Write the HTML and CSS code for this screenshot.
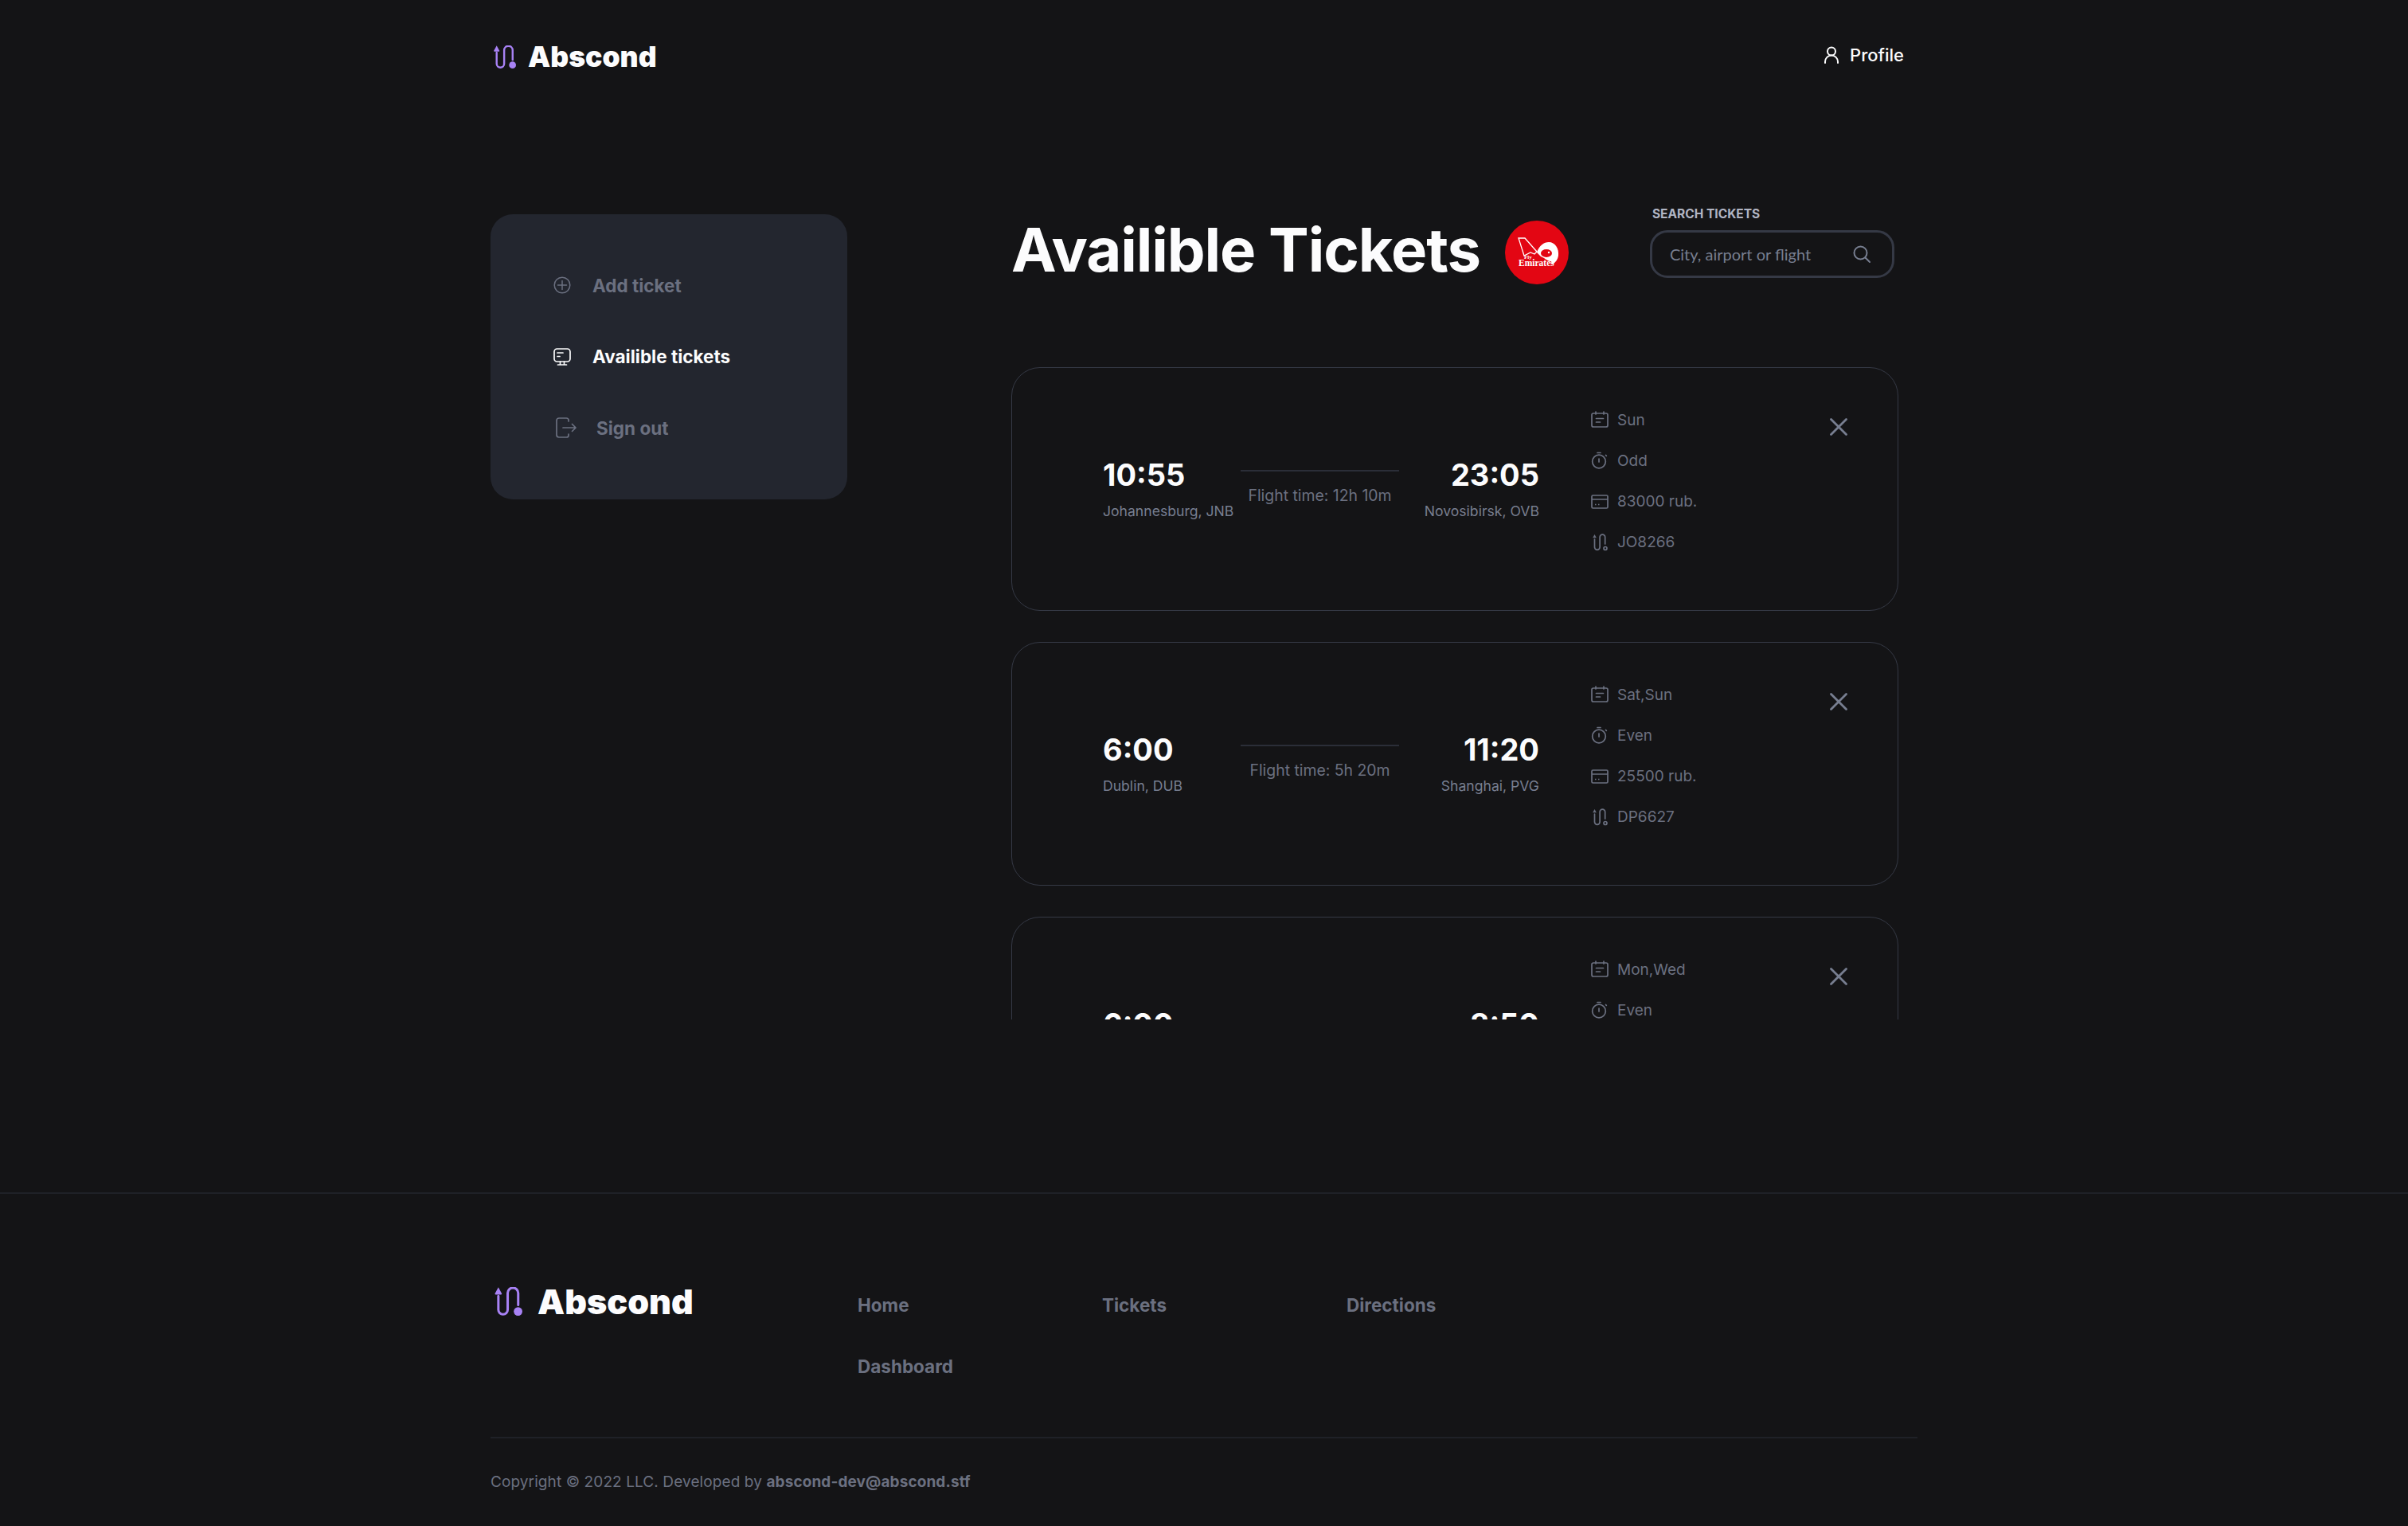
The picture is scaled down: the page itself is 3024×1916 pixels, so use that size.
FILE: index.html
```html
<!DOCTYPE html>
<html lang="en">
<head>
    <meta charset="UTF-8">
    <meta name="viewport" content="width=device-width, initial-scale=1.0">
    <title>Abscond</title>
    <link rel="stylesheet" href="styles.css">
</head>
<body>
<svg class="sprite" width="0" height="0">
    <symbol id="i-logo" viewBox="0 0 24 24">
        <path d="M3.9 7.5V19a3.9 3.9 0 0 0 7.8 0V5a4.4 4.4 0 0 1 8.8 0v10" fill="none" stroke="currentColor" stroke-width="2" stroke-linecap="round"/>
        <path d="M3.9 .2 6.7 5.4a.7.7 0 0 1-.6 1H1.700a.7.7 0 0 1-.6-1z" fill="currentColor"/>
        <circle cx="20.400" cy="20.400" r="3.600" fill="currentColor"/>
    </symbol>
    <symbol id="i-route" viewBox="0 0 22 22">
        <path d="M4.500 7v10a3.300 3.300 0 0 0 6.600 0V4.500a3.300 3.300 0 0 1 6.600 0V13" fill="none" stroke="currentColor" stroke-width="1.700" stroke-linecap="round"/>
        <path d="M4.500 1 6.800 5.200H2.200z" fill="currentColor"/>
        <circle cx="18" cy="18.500" r="2" fill="none" stroke="currentColor" stroke-width="1.700"/>
    </symbol>
    <symbol id="i-cal" viewBox="0 0 22 22">
        <path d="M3 3h16a2 2 0 0 1 2 2v13a2 2 0 0 1-2 2H3a2 2 0 0 1-2-2V5a2 2 0 0 1 2-2zM6 1v3M16 1v3M6.500 9.500h9M6.500 14h5" fill="none" stroke="currentColor" stroke-width="1.700" stroke-linecap="round"/>
    </symbol>
    <symbol id="i-timer" viewBox="0 0 22 22">
        <circle cx="10" cy="12.500" r="8.300" fill="none" stroke="currentColor" stroke-width="1.700"/>
        <path d="M8 1.500h4M10 9v4M18.500 4.500l.8.8" fill="none" stroke="currentColor" stroke-width="1.700" stroke-linecap="round"/>
    </symbol>
    <symbol id="i-card" viewBox="0 0 22 22">
        <rect x="1" y="3" width="20" height="16" rx="1.500" fill="none" stroke="currentColor" stroke-width="1.700"/>
        <path d="M1 8h20M5 14.500h1.500M9 14.500h1.500" fill="none" stroke="currentColor" stroke-width="1.700"/>
    </symbol>
    <symbol id="i-close" viewBox="0 0 22 22">
        <path d="M1.500 1.500l19 19M20.500 1.500l-19 19" fill="none" stroke="currentColor" stroke-width="2.800" stroke-linecap="round"/>
    </symbol>
</svg>

<header class="wrap topbar">
    <a class="logo" href="#">
        <svg class="logo-icon"><use href="#i-logo"/></svg>
        <span>Abscond</span>
    </a>
    <a class="profile" href="#">
        <svg width="18" height="22" viewBox="0 0 18 22" fill="none" stroke="currentColor" stroke-width="2" stroke-linecap="round">
            <circle cx="9" cy="6.500" r="5"/>
            <path d="M1 21v-1.500a8 8 0 0 1 16 0V21"/>
        </svg>
        Profile
    </a>
</header>

<main class="wrap content">
    <nav class="sidebar">
        <a class="side-link" href="#">
            <svg width="22" height="22" viewBox="0 0 22 22" fill="none" stroke="currentColor" stroke-width="1.500" stroke-linecap="round">
                <circle cx="11" cy="11" r="9.800"/>
                <path d="M11 5.500v11M5.500 11h11"/>
            </svg>
            Add ticket
        </a>
        <a class="side-link active" href="#">
            <svg width="22" height="22" viewBox="0 0 22 22" fill="none" stroke="currentColor" stroke-width="1.700" stroke-linecap="round">
                <rect x="1" y="1" width="20" height="16" rx="3.500"/>
                <path d="M5 6h7M5 10.500h3M8.500 17v3.500M13.500 17v3.500M5.500 21h11"/>
            </svg>
            Availible tickets
        </a>
        <a class="side-link sign-out" href="#">
            <svg width="26" height="26" viewBox="0 0 26 26" fill="none" stroke="currentColor" stroke-width="1.700" stroke-linecap="round" stroke-linejoin="round">
                <path d="M16 5V3.500A2.500 2.500 0 0 0 13.500 1H4A3 3 0 0 0 1 4v18a3 3 0 0 0 3 3h9.500a2.500 2.500 0 0 0 2.500-2.500V21"/>
                <path d="M9 13h16M20.500 8.500 25 13l-4.500 4.500"/>
            </svg>
            Sign out
        </a>
    </nav>

    <section class="tickets">
        <div class="tickets-head">
            <h1>Availible Tickets</h1>
            <svg class="airline" viewBox="0 0 80 80">
                <circle cx="40" cy="40" r="40" fill="#e30613"/>
                <path d="M17 22h8l15 17-3 3-5-2-8 4z" fill="none" stroke="#fff" stroke-width="1.300"/>
                <path d="M40 40C43 31 49 27 55 27c8 0 13 8 12 17-.5 4-3 8-7 11l-2-4c-3 .5-6-2-9-4l-4-2z" fill="#fff"/>
                <ellipse cx="52" cy="41" rx="7" ry="5" fill="#e30613"/>
                <circle cx="55" cy="40" r="1.200" fill="#fff"/>
                <text class="airline-fly" x="24" y="48">Fly</text>
                <text class="airline-name" x="17" y="57">Emirates</text>
            </svg>
            <div class="search">
                <label class="search-label" for="search">SEARCH TICKETS</label>
                <div class="search-box">
                    <input id="search" type="text" placeholder="City, airport or flight">
                    <svg width="24" height="24" viewBox="0 0 24 24" fill="none" stroke="currentColor" stroke-width="2" stroke-linecap="round">
                        <circle cx="10.500" cy="10.500" r="8"/>
                        <path d="M16.500 16.500 22 22"/>
                    </svg>
                </div>
            </div>
        </div>

        <div class="ticket-list">
            <article class="ticket">
                <div class="route">
                    <div>
                        <div class="time">10:55</div>
                        <div class="place">Johannesburg, JNB</div>
                    </div>
                    <div class="duration">Flight time: 12h 10m</div>
                    <div class="route-end">
                        <div class="time">23:05</div>
                        <div class="place">Novosibirsk, OVB</div>
                    </div>
                </div>
                <ul class="details">
                    <li><svg class="detail-icon"><use href="#i-cal"/></svg>Sun</li>
                    <li><svg class="detail-icon"><use href="#i-timer"/></svg>Odd</li>
                    <li><svg class="detail-icon"><use href="#i-card"/></svg>83000 rub.</li>
                    <li><svg class="detail-icon"><use href="#i-route"/></svg>JO8266</li>
                </ul>
                <button class="close" aria-label="Remove"><svg><use href="#i-close"/></svg></button>
            </article>

            <article class="ticket">
                <div class="route">
                    <div>
                        <div class="time">6:00</div>
                        <div class="place">Dublin, DUB</div>
                    </div>
                    <div class="duration">Flight time: 5h 20m</div>
                    <div class="route-end">
                        <div class="time">11:20</div>
                        <div class="place">Shanghai, PVG</div>
                    </div>
                </div>
                <ul class="details">
                    <li><svg class="detail-icon"><use href="#i-cal"/></svg>Sat,Sun</li>
                    <li><svg class="detail-icon"><use href="#i-timer"/></svg>Even</li>
                    <li><svg class="detail-icon"><use href="#i-card"/></svg>25500 rub.</li>
                    <li><svg class="detail-icon"><use href="#i-route"/></svg>DP6627</li>
                </ul>
                <button class="close" aria-label="Remove"><svg><use href="#i-close"/></svg></button>
            </article>

            <article class="ticket">
                <div class="route">
                    <div>
                        <div class="time">6:00</div>
                        <div class="place">Dublin, DUB</div>
                    </div>
                    <div class="duration">Flight time: 2h 50m</div>
                    <div class="route-end">
                        <div class="time">8:50</div>
                        <div class="place">Shanghai, PVG</div>
                    </div>
                </div>
                <ul class="details">
                    <li><svg class="detail-icon"><use href="#i-cal"/></svg>Mon,Wed</li>
                    <li><svg class="detail-icon"><use href="#i-timer"/></svg>Even</li>
                    <li><svg class="detail-icon"><use href="#i-card"/></svg>25500 rub.</li>
                    <li><svg class="detail-icon"><use href="#i-route"/></svg>DP6627</li>
                </ul>
                <button class="close" aria-label="Remove"><svg><use href="#i-close"/></svg></button>
            </article>
        </div>
    </section>
</main>

<footer class="footer">
    <div class="wrap">
        <div class="footer-top">
            <a class="logo logo-big" href="#">
                <svg class="logo-icon"><use href="#i-logo"/></svg>
                <span>Abscond</span>
            </a>
            <div class="footer-nav">
                <a href="#">Home</a>
                <a href="#">Tickets</a>
                <a href="#">Directions</a>
                <a href="#">Dashboard</a>
            </div>
        </div>
        <p class="copyright">Copyright © 2022 LLC. Developed by <b>abscond-dev@abscond.stf</b></p>
    </div>
</footer>
</body>
</html>
```

FILE: styles.css
```css
* {
    box-sizing: border-box;
}
html, body {
    margin: 0;
    padding: 0;
}
body {
    height: 1916px;
    overflow: hidden;
    background-color: #141416;
    color: #fcfcfd;
    font-family: Inter, "Liberation Sans", sans-serif;
}
a {
    color: inherit;
    text-decoration: none;
}
.sprite {
    display: block;
}
.wrap {
    width: 1792px;
    margin: 0 auto;
}

/* header */
.topbar {
    height: 140px;
    display: flex;
    align-items: center;
    justify-content: space-between;
    padding: 2px 17px 0 0;
}
.logo {
    display: flex;
    align-items: center;
    gap: 15px;
    font-size: 35.5px;
    font-weight: 900;
}
.logo-icon {
    width: 29px;
    height: 29px;
    margin-left: 3px;
    color: #a882f5;
}
.logo-big {
    gap: 19px;
    font-size: 43px;
}
.logo-big .logo-icon {
    width: 36px;
    height: 36px;
    margin-left: 4px;
}
.profile {
    display: flex;
    align-items: center;
    gap: 14px;
    margin-top: -5px;
    font-size: 22px;
    font-weight: 500;
}

/* page */
.content {
    height: 1357px;
    display: flex;
    align-items: flex-start;
    padding-top: 129px;
}
.sidebar {
    width: 448px;
    height: 358px;
    flex-shrink: 0;
    display: flex;
    flex-direction: column;
    gap: 63.5px;
    padding: 76px 0 0 79px;
    background-color: #23262f;
    border-radius: 28px;
}
.side-link {
    height: 26px;
    display: flex;
    align-items: center;
    gap: 27px;
    font-size: 22.5px;
    font-weight: 700;
    color: #6b7080;
}
.side-link.active {
    color: #fcfcfd;
}
.sign-out {
    gap: 25px;
    padding-left: 3px;
}

.tickets {
    width: 1114px;
    margin-left: 206px;
}
.tickets-head {
    height: 192px;
    display: flex;
    align-items: flex-start;
}
h1 {
    margin: 0;
    font-size: 76px;
    line-height: 88px;
    font-weight: 700;
    letter-spacing: -1.1px;
    white-space: nowrap;
}
.airline {
    width: 80px;
    height: 80px;
    flex-shrink: 0;
    margin: 8px 0 0 31px;
}
.airline-fly {
    font-family: "Liberation Serif", serif;
    font-size: 7px;
    font-weight: 700;
    fill: #fff;
}
.airline-name {
    font-family: "Liberation Serif", serif;
    font-size: 11.5px;
    font-weight: 700;
    fill: #fff;
}
.search {
    flex-shrink: 0;
    margin-left: 102px;
    margin-top: -9px;
}
.search-label {
    display: block;
    margin: 0 0 11px 3px;
    font-size: 15.5px;
    line-height: 18px;
    font-weight: 700;
    color: #b1b5c3;
}
.search-box {
    width: 307px;
    height: 60px;
    display: flex;
    align-items: center;
    padding: 0 26px 0 22px;
    border: 3px solid #353945;
    border-radius: 22px;
    color: #777e90;
}
.search-box input {
    flex: 1;
    min-width: 0;
    padding: 0;
    border: none;
    outline: none;
    background: none;
    font-family: Lato, sans-serif;
    font-size: 20px;
    color: #777e90;
}
.search-box input::placeholder {
    color: #777e90;
    opacity: 1;
}

/* tickets */
.ticket-list {
    height: 819px;
    overflow: hidden;
}
.ticket {
    height: 306px;
    margin-bottom: 39px;
    display: flex;
    align-items: center;
    padding: 0 0 0 114px;
    border: 1.5px solid #353945;
    border-radius: 36px;
}
.route {
    width: 548px;
    display: grid;
    grid-template-columns: 173px 199px 176px;
}
.route-end {
    text-align: right;
}
.time {
    margin-top: -2px;
    font-size: 38px;
    line-height: 48px;
    font-weight: 700;
}
.place {
    margin-top: 11px;
    font-size: 17.6px;
    line-height: 22px;
    color: #777e90;
}
.duration {
    height: 64px;
    margin-top: 16px;
    padding-top: 18px;
    border-top: 2px solid #2b2e38;
    text-align: center;
    font-size: 19.4px;
    line-height: 24px;
    white-space: nowrap;
    color: #6b7080;
}
.details {
    width: 300px;
    margin: 0 0 20px 65px;
    padding: 0;
    list-style: none;
}
.details li {
    height: 51.3px;
    display: flex;
    align-items: center;
    gap: 11px;
    font-size: 19px;
    color: #6b7080;
}
.detail-icon {
    width: 22px;
    height: 22px;
    flex-shrink: 0;
}
.close {
    width: 22px;
    height: 22px;
    align-self: flex-start;
    margin-top: 63px;
    padding: 0;
    border: none;
    background: none;
    color: #777e90;
}
.close svg {
    width: 22px;
    height: 22px;
    display: block;
}

/* footer */
.footer {
    height: 419px;
    border-top: 2px solid #1f2127;
}
.footer-top {
    height: 307px;
    display: flex;
    align-items: flex-start;
    padding-top: 109px;
    border-bottom: 2px solid #1f2127;
}
.footer-top .logo {
    width: 461px;
}
.footer-nav {
    display: grid;
    grid-template-columns: repeat(3, 307px);
    row-gap: 50px;
    padding-top: 17px;
    font-size: 22.5px;
    line-height: 27px;
    font-weight: 700;
    color: #6b7080;
}
.copyright {
    margin: 43px 0 0;
    font-size: 19px;
    line-height: 24px;
    letter-spacing: .1px;
    color: #6b7080;
}
.copyright b {
    font-weight: 700;
}
```
